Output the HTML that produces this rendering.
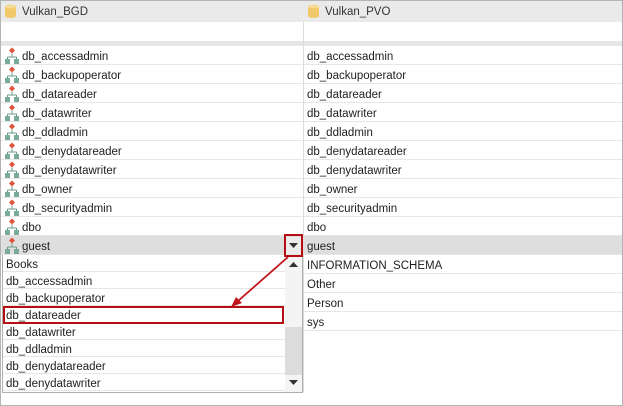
<!DOCTYPE html>
<html><head><meta charset="utf-8"><style>
*{margin:0;padding:0;box-sizing:border-box}
body{width:623px;height:406px;overflow:hidden;background:#fff;font-family:"Liberation Sans",sans-serif;font-size:11.5px;color:#1e1e1e;position:relative}
.a{position:absolute}
.t{position:absolute;line-height:23px;height:19px;white-space:nowrap}
.row{position:absolute;height:19px;border-bottom:1px solid #e6e6e6;line-height:23px;white-space:nowrap}
.dd{position:absolute;height:17px;border-bottom:1px solid #e6e6e6;line-height:21px;padding-left:3px;white-space:nowrap;left:3px;width:282px}
</style></head><body>
<div class="a" style="left:0;top:0;width:623px;height:406px;border:1px solid #b4b4b4"></div>
<div class="a" style="left:1px;top:1px;width:621px;height:21px;background:#eaeaea"></div>
<svg class="a" style="left:5px;top:4px" width="11" height="14"><rect x="0" y="2" width="11" height="10" fill="#f1c86a"/><ellipse cx="5.5" cy="2.5" rx="5.5" ry="2" fill="#f6dc95"/><ellipse cx="5.5" cy="12" rx="5.5" ry="2" fill="#f1c86a"/></svg>
<div class="t" style="left:22px;top:1px;color:#333">Vulkan_BGD</div>
<svg class="a" style="left:308px;top:4px" width="11" height="14"><rect x="0" y="2" width="11" height="10" fill="#f1c86a"/><ellipse cx="5.5" cy="2.5" rx="5.5" ry="2" fill="#f6dc95"/><ellipse cx="5.5" cy="12" rx="5.5" ry="2" fill="#f1c86a"/></svg>
<div class="t" style="left:325px;top:1px;color:#333">Vulkan_PVO</div>
<div class="a" style="left:1px;top:41px;width:621px;height:5px;background:#e6e6e6"></div>
<div class="a" style="left:303px;top:22px;width:1px;height:370px;background:#dcdcdc"></div>
<div class="a" style="left:1px;top:236px;width:301px;height:19px;background:#dedede"></div>
<div class="a" style="left:304px;top:236px;width:318px;height:19px;background:#dedede"></div>

<div id="L"></div>
<script>
var n=["db_accessadmin","db_backupoperator","db_datareader","db_datawriter","db_ddladmin","db_denydatareader","db_denydatawriter","db_owner","db_securityadmin","dbo","guest"];
var r=["db_accessadmin","db_backupoperator","db_datareader","db_datawriter","db_ddladmin","db_denydatareader","db_denydatawriter","db_owner","db_securityadmin","dbo","guest","INFORMATION_SCHEMA","Other","Person","sys"];
var ic='<svg width="18" height="19"><path d="M10 1.5 L13 4.5 L10 7.5 L7 4.5Z" fill="#e0533b"/><path d="M10 7.5V11M5.5 11H14.5M5.5 11V13M14.5 11V13" stroke="#6a9a88" fill="none"/><rect x="3" y="13" width="5" height="5" fill="#7aab98"/><rect x="12" y="13" width="5" height="5" fill="#7aab98"/></svg>';
var h='';
for(var i=0;i<n.length;i++){var y=46+i*19;
h+='<div class="row" style="left:1px;top:'+y+'px;width:302px"></div><div class="a" style="left:2px;top:'+y+'px">'+ic+'</div><div class="t" style="left:22px;top:'+y+'px">'+n[i]+'</div>';}
for(var i=0;i<r.length;i++){var y=46+i*19;
h+='<div class="row" style="left:304px;top:'+y+'px;width:318px;padding-left:3px">'+r[i]+'</div>';}
document.getElementById('L').innerHTML=h;
</script>

<div class="a" style="left:285px;top:237px;width:17px;height:17px;background:#ececec"></div>
<svg class="a" style="left:289px;top:243px" width="9" height="5"><path d="M0 0H9L4.5 5Z" fill="#333"/></svg>

<div class="a" style="left:2px;top:255px;width:301px;height:138px;background:#fff;border:1px solid #b0b0b0;border-top:none"></div>
<div id="D"></div>
<script>
var d=["Books","db_accessadmin","db_backupoperator","db_datareader","db_datawriter","db_ddladmin","db_denydatareader","db_denydatawriter"];
var h='';for(var i=0;i<d.length;i++)h+='<div class="dd" style="top:'+(255+i*17)+'px">'+d[i]+'</div>';
document.getElementById('D').innerHTML=h;
</script>
<div class="a" style="left:285px;top:256px;width:17px;height:136px;background:#f4f4f4"></div>
<div class="a" style="left:285px;top:327px;width:17px;height:48px;background:#dcdcdc"></div>
<svg class="a" style="left:289px;top:262px" width="9" height="5"><path d="M0 5H9L4.5 0Z" fill="#333"/></svg>
<svg class="a" style="left:289px;top:380px" width="9" height="5"><path d="M0 0H9L4.5 5Z" fill="#333"/></svg>

<div class="a" style="left:3px;top:306px;width:281px;height:18px;border:2px solid #b40d12"></div>
<div class="a" style="left:284px;top:234px;width:19px;height:23px;border:2px solid #b40d12"></div>
<svg class="a" style="left:0;top:0" width="623" height="406"><line x1="288" y1="257" x2="238" y2="301" stroke="#c0141a" stroke-width="1.8"/><path d="M231 307 L236 297 L242 303Z" fill="#c0141a"/></svg>
</body></html>
